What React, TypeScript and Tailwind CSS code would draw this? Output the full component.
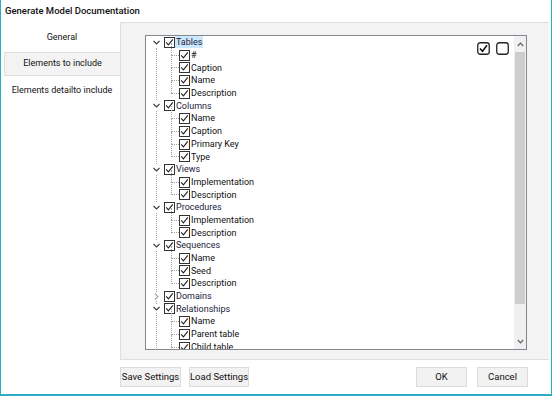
import React from 'react';

type Node = { label: string; children?: string[]; collapsed?: boolean; selected?: boolean };

const tree: Node[] = [
  { label: 'Tables', children: ['#', 'Caption', 'Name', 'Description'], selected: true },
  { label: 'Columns', children: ['Name', 'Caption', 'Primary Key', 'Type'] },
  { label: 'Views', children: ['Implementation', 'Description'] },
  { label: 'Procedures', children: ['Implementation', 'Description'] },
  { label: 'Sequences', children: ['Name', 'Seed', 'Description'] },
  { label: 'Domains', collapsed: true },
  { label: 'Relationships', children: ['Name', 'Parent table', 'Child table'] },
];

const Check = ({ checked = true, className = '' }: { checked?: boolean; className?: string }) => (
  <svg width="11" height="11" viewBox="0 0 11 11" className={className}>
    <rect x="0.5" y="0.5" width="10" height="10" fill="white" stroke="#333" />
    {checked && <path d="M2.2 5.4 L4.4 7.8 L8.8 2.4" fill="none" stroke="#222" strokeWidth="1.1" />}
  </svg>
);

const Chevron = ({ open }: { open: boolean }) => (
  <svg width="9" height="9" viewBox="0 0 9 9" className="bg-white">
    {open ? (
      <path d="M1.5 3 L4.5 6 L7.5 3" fill="none" stroke="#404040" strokeWidth="1.2" />
    ) : (
      <path d="M3 1.5 L6 4.5 L3 7.5" fill="none" stroke="#a6a6a6" strokeWidth="1.1" />
    )}
  </svg>
);

const Row = ({ children }: { children: React.ReactNode }) => (
  <div className="relative h-[12.7px] flex items-center">{children}</div>
);

const TreeGroup = ({ node }: { node: Node }) => (
  <div>
    <Row>
      <div className="absolute left-[6px] top-[2px] z-10 flex"><Chevron open={!node.collapsed} /></div>
      <Check className="absolute left-[18px] top-[1px]" />
      <span
        className={`absolute left-[29px] px-[1px] leading-[12px] text-[#1b1b3a] ${node.selected ? 'bg-[#cce8ff]' : ''}`}
      >
        {node.label}
      </span>
    </Row>
    {!node.collapsed &&
      node.children?.map((c, i) => (
        <Row key={i}>
          <div
            className={`absolute left-[25px] top-[-6px] w-0 border-l border-dotted border-[#a0a0a0] ${
              i === 0 ? 'h-[12.5px]' : 'h-[12.7px]'
            }`}
          />
          <div className="absolute left-[25px] top-[6px] w-[8px] border-t border-dotted border-[#a0a0a0]" />
          <Check className="absolute left-[33px] top-[1px]" />
          <span className="absolute left-[45px] leading-[12px] text-[#111]">{c}</span>
        </Row>
      ))}
  </div>
);

const Btn = ({ children, w }: { children: React.ReactNode; w: string }) => (
  <button
    className={`${w} h-[20px] bg-[#f2f2f2] border border-[#dcdcdc] text-[9.5px] text-[#111] leading-none whitespace-nowrap px-0`}
  >
    {children}
  </button>
);

export default function App() {
  return (
    <div
      className="w-[552px] h-[396px] bg-white border-x border-b-2 border-[#2aaec4] flex flex-col overflow-hidden"
      style={{ fontFamily: 'Roboto, "Liberation Sans", sans-serif' }}
    >
      <div className="h-[22px] flex items-center pl-[4px] text-[9.5px] font-medium text-[#111]">
        Generate Model Documentation
      </div>
      <div className="flex h-[338px]">
        <div className="w-[119px] flex flex-col text-[9px] text-[#111] pt-[2px] pl-[3px]">
          <div className="h-[28px] flex items-center justify-center">General</div>
          <div className="h-[24px] flex items-center justify-center bg-[#f3f3f3] border-y border-l border-[#dedede]">
            Elements to include
          </div>
          <div className="h-[28px] flex items-center justify-center mt-[1px]">Elements detailto include</div>
        </div>
        <div className="flex-1 mr-[2px] bg-[#f3f3f3] border-t border-l border-b border-[#dedede] pl-[24px] pt-[12px] pr-[22px] pb-[9px]">
          <div className="h-full border border-[#828790] bg-white flex">
            <div className="relative flex-1 overflow-hidden text-[9px]">
              <div className="absolute left-[10px] top-[12px] h-[400px] border-l border-dotted border-[#a0a0a0]" />
              <div className="absolute right-[5px] top-[6px] flex gap-[6px]">
                <svg width="13" height="13" viewBox="0 0 13 13">
                  <rect x="0.75" y="0.75" width="11.5" height="11.5" rx="2.5" fill="white" stroke="#222" strokeWidth="1.3" />
                  <path d="M3 6.5 L5.5 9.3 L10 3.3" fill="none" stroke="#111" strokeWidth="1.6" />
                </svg>
                <svg width="13" height="13" viewBox="0 0 13 13">
                  <rect x="0.75" y="0.75" width="11.5" height="11.5" rx="2.5" fill="white" stroke="#222" strokeWidth="1.3" />
                </svg>
              </div>
              <div className="relative">
                {tree.map((n, i) => (
                  <TreeGroup key={i} node={n} />
                ))}
              </div>
            </div>
            <div className="w-[12px] bg-[#f0f0f0] flex flex-col items-center">
              <div className="h-[16px] flex items-center justify-center">
                <svg width="7" height="5" viewBox="0 0 7 5">
                  <path d="M0.8 4 L3.5 1.2 L6.2 4" fill="none" stroke="#606060" strokeWidth="1.2" />
                </svg>
              </div>
              <div className="w-[10px] h-[252px] bg-[#cdcdcd]" />
              <div className="flex-1" />
              <div className="h-[16px] flex items-center justify-center">
                <svg width="7" height="5" viewBox="0 0 7 5">
                  <path d="M0.8 1 L3.5 3.8 L6.2 1" fill="none" stroke="#606060" strokeWidth="1.2" />
                </svg>
              </div>
            </div>
          </div>
        </div>
      </div>
      <div className="flex items-center pl-[119px] pr-[23px] pt-[7px]">
        <Btn w="w-[61px]">Save Settings</Btn>
        <div className="w-[8px]" />
        <Btn w="w-[60px]">Load Settings</Btn>
        <div className="flex-1" />
        <Btn w="w-[51px]">OK</Btn>
        <div className="w-[10px]" />
        <Btn w="w-[51px]">Cancel</Btn>
      </div>
    </div>
  );
}
